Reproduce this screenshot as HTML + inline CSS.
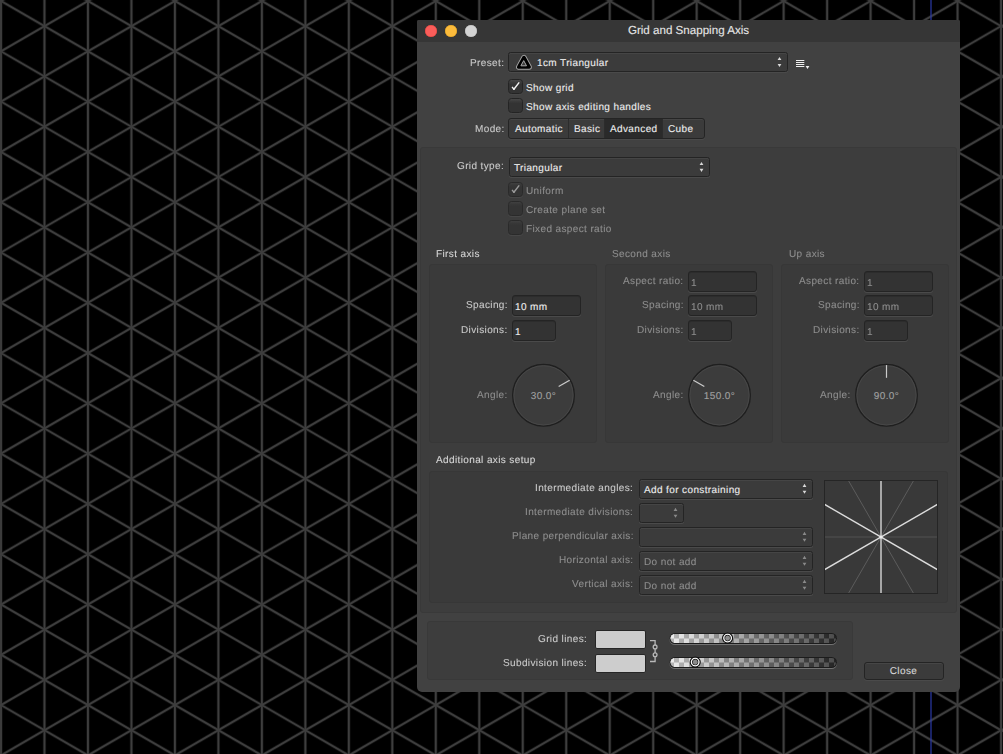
<!DOCTYPE html>
<html><head><meta charset="utf-8">
<style>
html,body{margin:0;padding:0;}
body{width:1003px;height:754px;overflow:hidden;background:#000;position:relative;font-family:"Liberation Sans",sans-serif;font-size:10px;letter-spacing:0.38px;text-rendering:geometricPrecision;-webkit-text-stroke:0.12px currentColor;}
svg.bg{position:absolute;left:0;top:0;}
.a{position:absolute;}
.t{position:absolute;line-height:12px;white-space:nowrap;color:#d2d2d2;}
.ttl{font-size:11.6px;color:#e4e4e4;}
.lbl{color:#cacaca;-webkit-text-stroke:0.1px currentColor;will-change:transform;}
.hdr{color:#d6d6d6;-webkit-text-stroke:0.1px currentColor;will-change:transform;}
.dis{color:#8e8e8e;-webkit-text-stroke:0.1px currentColor;will-change:transform;}
.val{color:#ececec;}
.dial{color:#a0a0a0;}
.btxt{color:#d6d6d6;}
.panel{position:absolute;background:#3a3a3a;border:1px solid #373737;border-radius:3px;box-sizing:border-box;}
.pB{background:#3d3d3d;border-color:#393939;}
.dd{position:absolute;background:#3b3b3b;border:1px solid #242424;border-radius:2.5px;box-sizing:border-box;box-shadow:inset 0 1px 0 #454545,0 1px 0 #4a4a4a;}
.inp{position:absolute;background:#333;border:1px solid #242424;border-radius:3px;box-sizing:border-box;box-shadow:inset 0 1px 0 #2c2c2c,0 1px 0 #4a4a4a;}
.cb{position:absolute;background:linear-gradient(#484848 0,#3a3a3a 2.5px,#333 4.5px,#333);border:1px solid #242424;border-radius:3.5px;box-sizing:border-box;box-shadow:0 1px 0 #474747;}
.cbd{background:linear-gradient(#404040 0,#373737 2.5px,#343434 4.5px,#343434);border-color:#2a2a2a;}
.seg{position:absolute;background:#3b3b3b;border:1px solid #242424;border-radius:3px;box-sizing:border-box;box-shadow:inset 0 1px 0 #454545,0 1px 0 #4a4a4a;}
.sw{position:absolute;background:#cdcdcd;border:1px solid #262626;border-radius:2px;box-sizing:border-box;}
.btn{position:absolute;background:#3b3b3b;border:1px solid #242424;border-radius:3px;box-sizing:border-box;box-shadow:inset 0 1px 0 #464646,0 1px 0 #4a4a4a;}
.sl{position:absolute;width:167px;height:10px;border-radius:5px;overflow:hidden;box-shadow:0 1px 0 #6a6a6a;
 background-color:#9a9a9a;
 background-image:linear-gradient(45deg,#cfcfcf 25%,transparent 25%,transparent 75%,#cfcfcf 75%),linear-gradient(45deg,#cfcfcf 25%,transparent 25%,transparent 75%,#cfcfcf 75%);
 background-size:10px 10px;background-position:0 0,5px 5px;}
.slg{position:absolute;left:0;top:0;width:100%;height:100%;background:linear-gradient(90deg,rgba(240,240,240,0.55),rgba(30,30,30,0) 35%,rgba(30,30,30,0.85));}
.knob{position:absolute;width:11px;height:11px;border-radius:50%;box-sizing:border-box;border:1.3px solid #f4f4f4;box-shadow:0 0 0 1px #151515;background:#6e6e6e;}
</style></head><body>
<svg class="bg" width="1003" height="754">
<g stroke="#131313" stroke-width="3.4">
<line x1="1.00" y1="0" x2="1.00" y2="754"/>
<line x1="44.48" y1="0" x2="44.48" y2="754"/>
<line x1="87.96" y1="0" x2="87.96" y2="754"/>
<line x1="131.44" y1="0" x2="131.44" y2="754"/>
<line x1="174.92" y1="0" x2="174.92" y2="754"/>
<line x1="218.40" y1="0" x2="218.40" y2="754"/>
<line x1="261.88" y1="0" x2="261.88" y2="754"/>
<line x1="305.36" y1="0" x2="305.36" y2="754"/>
<line x1="348.84" y1="0" x2="348.84" y2="754"/>
<line x1="392.32" y1="0" x2="392.32" y2="754"/>
<line x1="435.80" y1="0" x2="435.80" y2="754"/>
<line x1="479.28" y1="0" x2="479.28" y2="754"/>
<line x1="522.76" y1="0" x2="522.76" y2="754"/>
<line x1="566.24" y1="0" x2="566.24" y2="754"/>
<line x1="609.72" y1="0" x2="609.72" y2="754"/>
<line x1="653.20" y1="0" x2="653.20" y2="754"/>
<line x1="696.68" y1="0" x2="696.68" y2="754"/>
<line x1="740.16" y1="0" x2="740.16" y2="754"/>
<line x1="783.64" y1="0" x2="783.64" y2="754"/>
<line x1="827.12" y1="0" x2="827.12" y2="754"/>
<line x1="870.60" y1="0" x2="870.60" y2="754"/>
<line x1="914.08" y1="0" x2="914.08" y2="754"/>
<line x1="957.56" y1="0" x2="957.56" y2="754"/>
<line x1="1001.04" y1="0" x2="1001.04" y2="754"/>
<line x1="0" y1="-653.35" x2="1003" y2="-73.30"/>
<line x1="0" y1="-652.19" x2="1003" y2="-1232.24"/>
<line x1="0" y1="-603.06" x2="1003" y2="-23.01"/>
<line x1="0" y1="-601.90" x2="1003" y2="-1181.95"/>
<line x1="0" y1="-552.77" x2="1003" y2="27.28"/>
<line x1="0" y1="-551.61" x2="1003" y2="-1131.66"/>
<line x1="0" y1="-502.48" x2="1003" y2="77.57"/>
<line x1="0" y1="-501.32" x2="1003" y2="-1081.37"/>
<line x1="0" y1="-452.19" x2="1003" y2="127.86"/>
<line x1="0" y1="-451.03" x2="1003" y2="-1031.08"/>
<line x1="0" y1="-401.90" x2="1003" y2="178.15"/>
<line x1="0" y1="-400.74" x2="1003" y2="-980.79"/>
<line x1="0" y1="-351.61" x2="1003" y2="228.44"/>
<line x1="0" y1="-350.45" x2="1003" y2="-930.50"/>
<line x1="0" y1="-301.32" x2="1003" y2="278.73"/>
<line x1="0" y1="-300.16" x2="1003" y2="-880.21"/>
<line x1="0" y1="-251.03" x2="1003" y2="329.02"/>
<line x1="0" y1="-249.87" x2="1003" y2="-829.92"/>
<line x1="0" y1="-200.74" x2="1003" y2="379.31"/>
<line x1="0" y1="-199.58" x2="1003" y2="-779.63"/>
<line x1="0" y1="-150.45" x2="1003" y2="429.60"/>
<line x1="0" y1="-149.29" x2="1003" y2="-729.34"/>
<line x1="0" y1="-100.16" x2="1003" y2="479.89"/>
<line x1="0" y1="-99.00" x2="1003" y2="-679.05"/>
<line x1="0" y1="-49.87" x2="1003" y2="530.18"/>
<line x1="0" y1="-48.71" x2="1003" y2="-628.76"/>
<line x1="0" y1="0.42" x2="1003" y2="580.47"/>
<line x1="0" y1="1.58" x2="1003" y2="-578.47"/>
<line x1="0" y1="50.71" x2="1003" y2="630.76"/>
<line x1="0" y1="51.87" x2="1003" y2="-528.18"/>
<line x1="0" y1="101.00" x2="1003" y2="681.05"/>
<line x1="0" y1="102.16" x2="1003" y2="-477.89"/>
<line x1="0" y1="151.29" x2="1003" y2="731.34"/>
<line x1="0" y1="152.45" x2="1003" y2="-427.60"/>
<line x1="0" y1="201.58" x2="1003" y2="781.63"/>
<line x1="0" y1="202.74" x2="1003" y2="-377.31"/>
<line x1="0" y1="251.87" x2="1003" y2="831.92"/>
<line x1="0" y1="253.03" x2="1003" y2="-327.02"/>
<line x1="0" y1="302.16" x2="1003" y2="882.21"/>
<line x1="0" y1="303.32" x2="1003" y2="-276.73"/>
<line x1="0" y1="352.45" x2="1003" y2="932.50"/>
<line x1="0" y1="353.61" x2="1003" y2="-226.44"/>
<line x1="0" y1="402.74" x2="1003" y2="982.79"/>
<line x1="0" y1="403.90" x2="1003" y2="-176.15"/>
<line x1="0" y1="453.03" x2="1003" y2="1033.08"/>
<line x1="0" y1="454.19" x2="1003" y2="-125.86"/>
<line x1="0" y1="503.32" x2="1003" y2="1083.37"/>
<line x1="0" y1="504.48" x2="1003" y2="-75.57"/>
<line x1="0" y1="553.61" x2="1003" y2="1133.66"/>
<line x1="0" y1="554.77" x2="1003" y2="-25.28"/>
<line x1="0" y1="603.90" x2="1003" y2="1183.95"/>
<line x1="0" y1="605.06" x2="1003" y2="25.01"/>
<line x1="0" y1="654.19" x2="1003" y2="1234.24"/>
<line x1="0" y1="655.35" x2="1003" y2="75.30"/>
<line x1="0" y1="704.48" x2="1003" y2="1284.53"/>
<line x1="0" y1="705.64" x2="1003" y2="125.59"/>
<line x1="0" y1="754.77" x2="1003" y2="1334.82"/>
<line x1="0" y1="755.93" x2="1003" y2="175.88"/>
<line x1="0" y1="805.06" x2="1003" y2="1385.11"/>
<line x1="0" y1="806.22" x2="1003" y2="226.17"/>
<line x1="0" y1="855.35" x2="1003" y2="1435.40"/>
<line x1="0" y1="856.51" x2="1003" y2="276.46"/>
<line x1="0" y1="905.64" x2="1003" y2="1485.69"/>
<line x1="0" y1="906.80" x2="1003" y2="326.75"/>
<line x1="0" y1="955.93" x2="1003" y2="1535.98"/>
<line x1="0" y1="957.09" x2="1003" y2="377.04"/>
<line x1="0" y1="1006.22" x2="1003" y2="1586.27"/>
<line x1="0" y1="1007.38" x2="1003" y2="427.33"/>
<line x1="0" y1="1056.51" x2="1003" y2="1636.56"/>
<line x1="0" y1="1057.67" x2="1003" y2="477.62"/>
<line x1="0" y1="1106.80" x2="1003" y2="1686.85"/>
<line x1="0" y1="1107.96" x2="1003" y2="527.91"/>
<line x1="0" y1="1157.09" x2="1003" y2="1737.14"/>
<line x1="0" y1="1158.25" x2="1003" y2="578.20"/>
<line x1="0" y1="1207.38" x2="1003" y2="1787.43"/>
<line x1="0" y1="1208.54" x2="1003" y2="628.49"/>
<line x1="0" y1="1257.67" x2="1003" y2="1837.72"/>
<line x1="0" y1="1258.83" x2="1003" y2="678.78"/>
<line x1="0" y1="1307.96" x2="1003" y2="1888.01"/>
<line x1="0" y1="1309.12" x2="1003" y2="729.07"/>
<line x1="0" y1="1358.25" x2="1003" y2="1938.30"/>
<line x1="0" y1="1359.41" x2="1003" y2="779.36"/>
</g>
<g stroke="#3e3e3e" stroke-width="1.9">
<line x1="1.00" y1="0" x2="1.00" y2="754"/>
<line x1="44.48" y1="0" x2="44.48" y2="754"/>
<line x1="87.96" y1="0" x2="87.96" y2="754"/>
<line x1="131.44" y1="0" x2="131.44" y2="754"/>
<line x1="174.92" y1="0" x2="174.92" y2="754"/>
<line x1="218.40" y1="0" x2="218.40" y2="754"/>
<line x1="261.88" y1="0" x2="261.88" y2="754"/>
<line x1="305.36" y1="0" x2="305.36" y2="754"/>
<line x1="348.84" y1="0" x2="348.84" y2="754"/>
<line x1="392.32" y1="0" x2="392.32" y2="754"/>
<line x1="435.80" y1="0" x2="435.80" y2="754"/>
<line x1="479.28" y1="0" x2="479.28" y2="754"/>
<line x1="522.76" y1="0" x2="522.76" y2="754"/>
<line x1="566.24" y1="0" x2="566.24" y2="754"/>
<line x1="609.72" y1="0" x2="609.72" y2="754"/>
<line x1="653.20" y1="0" x2="653.20" y2="754"/>
<line x1="696.68" y1="0" x2="696.68" y2="754"/>
<line x1="740.16" y1="0" x2="740.16" y2="754"/>
<line x1="783.64" y1="0" x2="783.64" y2="754"/>
<line x1="827.12" y1="0" x2="827.12" y2="754"/>
<line x1="870.60" y1="0" x2="870.60" y2="754"/>
<line x1="914.08" y1="0" x2="914.08" y2="754"/>
<line x1="957.56" y1="0" x2="957.56" y2="754"/>
<line x1="1001.04" y1="0" x2="1001.04" y2="754"/>
<line x1="0" y1="-653.35" x2="1003" y2="-73.30"/>
<line x1="0" y1="-652.19" x2="1003" y2="-1232.24"/>
<line x1="0" y1="-603.06" x2="1003" y2="-23.01"/>
<line x1="0" y1="-601.90" x2="1003" y2="-1181.95"/>
<line x1="0" y1="-552.77" x2="1003" y2="27.28"/>
<line x1="0" y1="-551.61" x2="1003" y2="-1131.66"/>
<line x1="0" y1="-502.48" x2="1003" y2="77.57"/>
<line x1="0" y1="-501.32" x2="1003" y2="-1081.37"/>
<line x1="0" y1="-452.19" x2="1003" y2="127.86"/>
<line x1="0" y1="-451.03" x2="1003" y2="-1031.08"/>
<line x1="0" y1="-401.90" x2="1003" y2="178.15"/>
<line x1="0" y1="-400.74" x2="1003" y2="-980.79"/>
<line x1="0" y1="-351.61" x2="1003" y2="228.44"/>
<line x1="0" y1="-350.45" x2="1003" y2="-930.50"/>
<line x1="0" y1="-301.32" x2="1003" y2="278.73"/>
<line x1="0" y1="-300.16" x2="1003" y2="-880.21"/>
<line x1="0" y1="-251.03" x2="1003" y2="329.02"/>
<line x1="0" y1="-249.87" x2="1003" y2="-829.92"/>
<line x1="0" y1="-200.74" x2="1003" y2="379.31"/>
<line x1="0" y1="-199.58" x2="1003" y2="-779.63"/>
<line x1="0" y1="-150.45" x2="1003" y2="429.60"/>
<line x1="0" y1="-149.29" x2="1003" y2="-729.34"/>
<line x1="0" y1="-100.16" x2="1003" y2="479.89"/>
<line x1="0" y1="-99.00" x2="1003" y2="-679.05"/>
<line x1="0" y1="-49.87" x2="1003" y2="530.18"/>
<line x1="0" y1="-48.71" x2="1003" y2="-628.76"/>
<line x1="0" y1="0.42" x2="1003" y2="580.47"/>
<line x1="0" y1="1.58" x2="1003" y2="-578.47"/>
<line x1="0" y1="50.71" x2="1003" y2="630.76"/>
<line x1="0" y1="51.87" x2="1003" y2="-528.18"/>
<line x1="0" y1="101.00" x2="1003" y2="681.05"/>
<line x1="0" y1="102.16" x2="1003" y2="-477.89"/>
<line x1="0" y1="151.29" x2="1003" y2="731.34"/>
<line x1="0" y1="152.45" x2="1003" y2="-427.60"/>
<line x1="0" y1="201.58" x2="1003" y2="781.63"/>
<line x1="0" y1="202.74" x2="1003" y2="-377.31"/>
<line x1="0" y1="251.87" x2="1003" y2="831.92"/>
<line x1="0" y1="253.03" x2="1003" y2="-327.02"/>
<line x1="0" y1="302.16" x2="1003" y2="882.21"/>
<line x1="0" y1="303.32" x2="1003" y2="-276.73"/>
<line x1="0" y1="352.45" x2="1003" y2="932.50"/>
<line x1="0" y1="353.61" x2="1003" y2="-226.44"/>
<line x1="0" y1="402.74" x2="1003" y2="982.79"/>
<line x1="0" y1="403.90" x2="1003" y2="-176.15"/>
<line x1="0" y1="453.03" x2="1003" y2="1033.08"/>
<line x1="0" y1="454.19" x2="1003" y2="-125.86"/>
<line x1="0" y1="503.32" x2="1003" y2="1083.37"/>
<line x1="0" y1="504.48" x2="1003" y2="-75.57"/>
<line x1="0" y1="553.61" x2="1003" y2="1133.66"/>
<line x1="0" y1="554.77" x2="1003" y2="-25.28"/>
<line x1="0" y1="603.90" x2="1003" y2="1183.95"/>
<line x1="0" y1="605.06" x2="1003" y2="25.01"/>
<line x1="0" y1="654.19" x2="1003" y2="1234.24"/>
<line x1="0" y1="655.35" x2="1003" y2="75.30"/>
<line x1="0" y1="704.48" x2="1003" y2="1284.53"/>
<line x1="0" y1="705.64" x2="1003" y2="125.59"/>
<line x1="0" y1="754.77" x2="1003" y2="1334.82"/>
<line x1="0" y1="755.93" x2="1003" y2="175.88"/>
<line x1="0" y1="805.06" x2="1003" y2="1385.11"/>
<line x1="0" y1="806.22" x2="1003" y2="226.17"/>
<line x1="0" y1="855.35" x2="1003" y2="1435.40"/>
<line x1="0" y1="856.51" x2="1003" y2="276.46"/>
<line x1="0" y1="905.64" x2="1003" y2="1485.69"/>
<line x1="0" y1="906.80" x2="1003" y2="326.75"/>
<line x1="0" y1="955.93" x2="1003" y2="1535.98"/>
<line x1="0" y1="957.09" x2="1003" y2="377.04"/>
<line x1="0" y1="1006.22" x2="1003" y2="1586.27"/>
<line x1="0" y1="1007.38" x2="1003" y2="427.33"/>
<line x1="0" y1="1056.51" x2="1003" y2="1636.56"/>
<line x1="0" y1="1057.67" x2="1003" y2="477.62"/>
<line x1="0" y1="1106.80" x2="1003" y2="1686.85"/>
<line x1="0" y1="1107.96" x2="1003" y2="527.91"/>
<line x1="0" y1="1157.09" x2="1003" y2="1737.14"/>
<line x1="0" y1="1158.25" x2="1003" y2="578.20"/>
<line x1="0" y1="1207.38" x2="1003" y2="1787.43"/>
<line x1="0" y1="1208.54" x2="1003" y2="628.49"/>
<line x1="0" y1="1257.67" x2="1003" y2="1837.72"/>
<line x1="0" y1="1258.83" x2="1003" y2="678.78"/>
<line x1="0" y1="1307.96" x2="1003" y2="1888.01"/>
<line x1="0" y1="1309.12" x2="1003" y2="729.07"/>
<line x1="0" y1="1358.25" x2="1003" y2="1938.30"/>
<line x1="0" y1="1359.41" x2="1003" y2="779.36"/>
</g>
<line x1="931" y1="0" x2="931" y2="754" stroke="#2a3aa8" stroke-width="1.2"/>
</svg>
<div class="a" style="left:417px;top:20px;width:543px;height:672px;background:#414141;border-radius:2px 2px 5px 5px;"></div>
<div class="a" style="left:417px;top:20px;width:543px;height:22px;background:#363636;border-radius:2px 2px 0 0;"></div>
<div class="a" style="left:425px;top:25px;width:12px;height:12px;border-radius:50%;background:#fa5d5a;box-shadow:inset 0 0 0 0.5px #e2463f;"></div>
<div class="a" style="left:445px;top:25px;width:12px;height:12px;border-radius:50%;background:#fcbb3c;box-shadow:inset 0 0 0 0.5px #dea123;"></div>
<div class="a" style="left:465px;top:25px;width:12px;height:12px;border-radius:50%;background:#d3d3d3;box-shadow:inset 0 0 0 0.5px #bdbdbd;"></div>
<div class="t ttl" style="top:25.0px;font-size:11.6px;letter-spacing:0;left:538.5px;width:300px;text-align:center;">Grid and Snapping Axis</div>
<div class="t lbl" style="top:58.0px;right:498.4px;text-align:right;">Preset:</div>
<div class="dd" style="left:508px;top:52px;width:280px;height:20px;"></div>
<svg class="a" style="left:513px;top:53px" width="22" height="19"><path d="M10.95 4.65 L5.75 14.05 L16.15 14.05Z" fill="#000" stroke="#a4a4a4" stroke-width="5.4" stroke-linejoin="round"/><path d="M10.95 4.65 L5.75 14.05 L16.15 14.05Z" fill="#000" stroke="#000" stroke-width="3.6" stroke-linejoin="round"/><path d="M10.7 7.6 L7.9 12.8 L13.5 12.8Z" fill="#3a3a3a" stroke="#a8a8a8" stroke-width="1" stroke-linejoin="round"/></svg>
<div class="t val" style="top:58.0px;left:537.0px;">1cm Triangular</div>
<svg class="a" style="left:775px;top:56px" width="9" height="12"><path d="M2.60 4.10 L4.50 1.00 L6.40 4.10Z M2.60 7.90 L4.50 11.00 L6.40 7.90Z" fill="#d8d8d8"/></svg>
<svg class="a" style="left:794px;top:58px" width="18" height="13"><g stroke="#f0f0f0" stroke-width="1"><line x1="2" y1="2.5" x2="10.3" y2="2.5"/><line x1="2" y1="4.5" x2="10.3" y2="4.5"/><line x1="2" y1="6.5" x2="10.3" y2="6.5"/><line x1="2" y1="8.5" x2="10.3" y2="8.5"/></g><path d="M11.6 8 L15.4 8 L13.5 11Z" fill="#f0f0f0"/></svg>
<div class="cb" style="left:508px;top:79px;width:15px;height:15px;"><svg style="position:absolute;left:0;top:0" width="14" height="14"><path d="M3.1 6.8 L4.9 9.3 L10.2 2.4" fill="none" stroke="#f2f2f2" stroke-width="1.45" stroke-linejoin="round"/><circle cx="4.9" cy="8.9" r="0.9" fill="#f2f2f2"/></svg></div>
<div class="t val" style="top:83.0px;left:526.0px;">Show grid</div>
<div class="cb" style="left:508px;top:98px;width:15px;height:15px;"></div>
<div class="t val" style="top:102.0px;left:526.0px;">Show axis editing handles</div>
<div class="t lbl" style="top:124.0px;right:498.4px;text-align:right;">Mode:</div>
<div class="seg" style="left:508px;top:118px;width:197px;height:21px;"></div>
<div class="a" style="left:604px;top:119px;width:59px;height:19px;background:#2a2a2a;"></div>
<div class="a" style="left:568px;top:119px;width:1px;height:19px;background:#2c2c2c;"></div>
<div class="a" style="left:604px;top:119px;width:1px;height:19px;background:#2c2c2c;"></div>
<div class="a" style="left:662px;top:119px;width:1px;height:19px;background:#2c2c2c;"></div>
<div class="t val" style="top:124.0px;left:515.0px;">Automatic</div>
<div class="t val" style="top:124.0px;left:574.0px;">Basic</div>
<div class="t val" style="top:124.0px;left:610.0px;">Advanced</div>
<div class="t val" style="top:124.0px;left:668.0px;">Cube</div>
<div class="panel pB" style="left:420px;top:147px;width:537px;height:466px;"></div>
<div class="t lbl" style="top:161.0px;right:499.0px;text-align:right;">Grid type:</div>
<div class="dd" style="left:509px;top:157px;width:201px;height:20px;"></div>
<div class="t val" style="top:163.0px;left:514.0px;">Triangular</div>
<svg class="a" style="left:697px;top:160px" width="9" height="12"><path d="M2.60 5.00 L4.50 1.90 L6.40 5.00Z M2.60 8.80 L4.50 11.90 L6.40 8.80Z" fill="#d8d8d8"/></svg>
<div class="cb cbd" style="left:508px;top:182px;width:15px;height:15px;"><svg style="position:absolute;left:0;top:0" width="14" height="14"><path d="M3.1 6.8 L4.9 9.3 L10.2 2.4" fill="none" stroke="#9a9a9a" stroke-width="1.45" stroke-linejoin="round"/><circle cx="4.9" cy="8.9" r="0.9" fill="#9a9a9a"/></svg></div>
<div class="t dis" style="top:186.0px;left:526.0px;">Uniform</div>
<div class="cb cbd" style="left:508px;top:201px;width:15px;height:15px;"></div>
<div class="t dis" style="top:205.0px;left:526.0px;">Create plane set</div>
<div class="cb cbd" style="left:508px;top:220px;width:15px;height:15px;"></div>
<div class="t dis" style="top:224.0px;left:526.0px;">Fixed aspect ratio</div>
<div class="t hdr" style="top:249.0px;left:436.0px;">First axis</div>
<div class="t dis" style="top:249.0px;left:612.0px;">Second axis</div>
<div class="t dis" style="top:249.0px;left:788.5px;">Up axis</div>
<div class="panel" style="left:429px;top:264px;width:168px;height:179px;"></div>
<div class="panel" style="left:605px;top:264px;width:168px;height:179px;"></div>
<div class="panel" style="left:781px;top:264px;width:168px;height:179px;"></div>
<div class="t lbl" style="top:300.0px;right:495.4px;text-align:right;">Spacing:</div>
<div class="inp" style="left:512px;top:295px;width:69px;height:21px;"></div>
<div class="t val" style="top:302.0px;left:515.0px;">10 mm</div>
<div class="t lbl" style="top:325.0px;right:495.4px;text-align:right;">Divisions:</div>
<div class="inp" style="left:512px;top:320px;width:44px;height:21px;"></div>
<div class="t val" style="top:327.0px;left:515.0px;">1</div>
<div class="t dis" style="top:276.0px;right:319.4px;text-align:right;">Aspect ratio:</div>
<div class="inp" style="left:688px;top:271px;width:69px;height:21px;"></div>
<div class="t dis" style="top:278.0px;left:691.0px;">1</div>
<div class="t dis" style="top:300.0px;right:319.4px;text-align:right;">Spacing:</div>
<div class="inp" style="left:688px;top:295px;width:69px;height:21px;"></div>
<div class="t dis" style="top:302.0px;left:691.0px;">10 mm</div>
<div class="t dis" style="top:325.0px;right:319.4px;text-align:right;">Divisions:</div>
<div class="inp" style="left:688px;top:320px;width:44px;height:21px;"></div>
<div class="t dis" style="top:327.0px;left:691.0px;">1</div>
<div class="t dis" style="top:276.0px;right:143.0px;text-align:right;">Aspect ratio:</div>
<div class="inp" style="left:864px;top:271px;width:69px;height:21px;"></div>
<div class="t dis" style="top:278.0px;left:867.0px;">1</div>
<div class="t dis" style="top:300.0px;right:143.0px;text-align:right;">Spacing:</div>
<div class="inp" style="left:864px;top:295px;width:69px;height:21px;"></div>
<div class="t dis" style="top:302.0px;left:867.0px;">10 mm</div>
<div class="t dis" style="top:325.0px;right:143.0px;text-align:right;">Divisions:</div>
<div class="inp" style="left:864px;top:320px;width:44px;height:21px;"></div>
<div class="t dis" style="top:327.0px;left:867.0px;">1</div>
<svg class="a" style="left:509px;top:361px" width="68" height="68"><circle cx="34.5" cy="34.30000000000001" r="30.8" fill="#3c3c3c" stroke="#1f1f1f" stroke-width="1.4"/><circle cx="34.5" cy="34.30000000000001" r="29.6" fill="none" stroke="#484848" stroke-width="0.9"/><line x1="49.66" y1="25.55" x2="60.65" y2="19.20" stroke="#cccccc" stroke-width="1.2"/></svg>
<div class="t dial" style="top:391.0px;left:393.5px;width:300px;text-align:center;">30.0°</div>
<div class="t dis" style="top:390.0px;right:495.2px;text-align:right;">Angle:</div>
<svg class="a" style="left:685px;top:361px" width="68" height="68"><circle cx="34.5" cy="34.30000000000001" r="30.8" fill="#3c3c3c" stroke="#1f1f1f" stroke-width="1.4"/><circle cx="34.5" cy="34.30000000000001" r="29.6" fill="none" stroke="#484848" stroke-width="0.9"/><line x1="19.34" y1="25.55" x2="8.35" y2="19.20" stroke="#cccccc" stroke-width="1.2"/></svg>
<div class="t dial" style="top:391.0px;left:569.5px;width:300px;text-align:center;">150.0°</div>
<div class="t dis" style="top:390.0px;right:319.4px;text-align:right;">Angle:</div>
<svg class="a" style="left:852px;top:361px" width="68" height="68"><circle cx="34.5" cy="34.30000000000001" r="30.8" fill="#3c3c3c" stroke="#1f1f1f" stroke-width="1.4"/><circle cx="34.5" cy="34.30000000000001" r="29.6" fill="none" stroke="#484848" stroke-width="0.9"/><line x1="34.50" y1="16.80" x2="34.50" y2="4.10" stroke="#cccccc" stroke-width="1.2"/></svg>
<div class="t dial" style="top:391.0px;left:736.5px;width:300px;text-align:center;">90.0°</div>
<div class="t dis" style="top:390.0px;right:152.5px;text-align:right;">Angle:</div>
<div class="t hdr" style="top:455.0px;left:436.0px;">Additional axis setup</div>
<div class="panel" style="left:429px;top:471px;width:519px;height:132px;"></div>
<div class="t lbl" style="top:483.0px;right:369.4px;text-align:right;">Intermediate angles:</div>
<div class="t dis" style="top:507.0px;right:369.4px;text-align:right;">Intermediate divisions:</div>
<div class="t dis" style="top:531.0px;right:369.4px;text-align:right;">Plane perpendicular axis:</div>
<div class="t dis" style="top:555.0px;right:369.4px;text-align:right;">Horizontal axis:</div>
<div class="t dis" style="top:579.0px;right:369.4px;text-align:right;">Vertical axis:</div>
<div class="dd" style="left:639px;top:479px;width:174px;height:20px;"></div>
<div class="t val" style="top:485.0px;left:644.0px;">Add for constraining</div>
<svg class="a" style="left:800px;top:482px" width="9" height="12"><path d="M2.60 4.90 L4.50 1.80 L6.40 4.90Z M2.60 8.70 L4.50 11.80 L6.40 8.70Z" fill="#d8d8d8"/></svg>
<div class="dd" style="left:639px;top:503px;width:45px;height:20px;"></div>
<svg class="a" style="left:671px;top:506px" width="9" height="12"><path d="M2.60 4.90 L4.50 1.80 L6.40 4.90Z M2.60 8.70 L4.50 11.80 L6.40 8.70Z" fill="#8a8a8a"/></svg>
<div class="dd" style="left:639px;top:527px;width:174px;height:20px;"></div>
<svg class="a" style="left:800px;top:530px" width="9" height="12"><path d="M2.60 4.90 L4.50 1.80 L6.40 4.90Z M2.60 8.70 L4.50 11.80 L6.40 8.70Z" fill="#8a8a8a"/></svg>
<div class="dd" style="left:639px;top:551px;width:174px;height:20px;"></div>
<div class="t dis" style="top:557.0px;left:644.0px;">Do not add</div>
<svg class="a" style="left:800px;top:554px" width="9" height="12"><path d="M2.60 4.90 L4.50 1.80 L6.40 4.90Z M2.60 8.70 L4.50 11.80 L6.40 8.70Z" fill="#8a8a8a"/></svg>
<div class="dd" style="left:639px;top:575px;width:174px;height:20px;"></div>
<div class="t dis" style="top:581.0px;left:644.0px;">Do not add</div>
<svg class="a" style="left:800px;top:578px" width="9" height="12"><path d="M2.60 4.90 L4.50 1.80 L6.40 4.90Z M2.60 8.70 L4.50 11.80 L6.40 8.70Z" fill="#8a8a8a"/></svg>
<div class="a" style="left:824px;top:480px;width:114px;height:114px;background:#393939;border:1px solid #252525;box-sizing:border-box;overflow:hidden;"><svg style="position:absolute;left:-1px;top:-1px" width="114" height="114"><line x1="-43.00" y1="57.00" x2="157.00" y2="57.00" stroke="#525252" stroke-width="1.2"/><line x1="7.00" y1="143.60" x2="107.00" y2="-29.60" stroke="#5c5c5c" stroke-width="1"/><line x1="107.00" y1="143.60" x2="7.00" y2="-29.60" stroke="#5c5c5c" stroke-width="1"/><line x1="57.00" y1="157.00" x2="57.00" y2="-43.00" stroke="#b4b4b4" stroke-width="1.8"/><line x1="-29.60" y1="107.00" x2="143.60" y2="7.00" stroke="#dcdcdc" stroke-width="1.4"/><line x1="143.60" y1="107.00" x2="-29.60" y2="7.00" stroke="#dcdcdc" stroke-width="1.4"/><circle cx="57" cy="57" r="1.6" fill="#eee"/></svg></div>
<div class="panel pB" style="left:427px;top:621px;width:426px;height:59px;"></div>
<div class="t lbl" style="top:634.0px;right:416.2px;text-align:right;">Grid lines:</div>
<div class="t lbl" style="top:658.0px;right:416.2px;text-align:right;">Subdivision lines:</div>
<div class="sw" style="left:595px;top:630px;width:51px;height:19px;"></div>
<div class="sw" style="left:595px;top:654px;width:51px;height:19px;"></div>
<svg class="a" style="left:647px;top:638px" width="14" height="28"><g fill="none" stroke="#b8b8b8" stroke-width="1.3"><path d="M3 2.6 H8.1 V7 M8.1 10.8 V14.9 M8.1 18.7 V23.5 H3"/><circle cx="8.1" cy="8.9" r="1.9"/><circle cx="8.1" cy="16.8" r="1.9"/></g></svg>
<svg class="a" style="left:668px;top:632px" width="172" height="14">
<defs><pattern id="ck1" x="6" y="2" width="10" height="9" patternUnits="userSpaceOnUse"><rect x="5" y="0" width="5" height="4.5" fill="#fff"/><rect x="0" y="4.5" width="5" height="4.5" fill="#fff"/></pattern>
<mask id="mk1"><rect x="0" y="0" width="172" height="14" fill="url(#ck1)"/></mask>
<linearGradient id="gd1" x1="0" x2="1" y1="0" y2="0"><stop offset="0" stop-color="#b6b6b6"/><stop offset="1" stop-color="#242424"/></linearGradient>
<linearGradient id="gl1" x1="0" x2="1" y1="0" y2="0"><stop offset="0" stop-color="#eeeeee"/><stop offset="1" stop-color="#4c4c4c"/></linearGradient></defs>
<rect x="1.5" y="2" width="167.5" height="11" rx="5.5" fill="#727272"/>
<rect x="1.5" y="1" width="167.5" height="11" rx="5.5" fill="#1c1c1c"/>
<rect x="2.5" y="2" width="165.5" height="9" rx="4.5" fill="url(#gd1)"/>
<rect x="2.5" y="2" width="165.5" height="9" rx="4.5" fill="url(#gl1)" mask="url(#mk1)"/>
</svg>
<svg class="a" style="left:721px;top:631px" width="14" height="14"><circle cx="6.600000000000023" cy="7.100000000000023" r="2.6" fill="#8a8a8a"/><circle cx="6.600000000000023" cy="7.100000000000023" r="2.95" fill="none" stroke="#151515" stroke-width="0.9"/><circle cx="6.600000000000023" cy="7.100000000000023" r="4.0" fill="none" stroke="#fafafa" stroke-width="1.45"/><circle cx="6.600000000000023" cy="7.100000000000023" r="5.05" fill="none" stroke="#0c0c0c" stroke-width="1.1"/></svg>
<svg class="a" style="left:668px;top:656px" width="172" height="14">
<defs><pattern id="ck2" x="6" y="2" width="10" height="9" patternUnits="userSpaceOnUse"><rect x="5" y="0" width="5" height="4.5" fill="#fff"/><rect x="0" y="4.5" width="5" height="4.5" fill="#fff"/></pattern>
<mask id="mk2"><rect x="0" y="0" width="172" height="14" fill="url(#ck2)"/></mask>
<linearGradient id="gd2" x1="0" x2="1" y1="0" y2="0"><stop offset="0" stop-color="#b6b6b6"/><stop offset="1" stop-color="#242424"/></linearGradient>
<linearGradient id="gl2" x1="0" x2="1" y1="0" y2="0"><stop offset="0" stop-color="#eeeeee"/><stop offset="1" stop-color="#4c4c4c"/></linearGradient></defs>
<rect x="1.5" y="2" width="167.5" height="11" rx="5.5" fill="#727272"/>
<rect x="1.5" y="1" width="167.5" height="11" rx="5.5" fill="#1c1c1c"/>
<rect x="2.5" y="2" width="165.5" height="9" rx="4.5" fill="url(#gd2)"/>
<rect x="2.5" y="2" width="165.5" height="9" rx="4.5" fill="url(#gl2)" mask="url(#mk2)"/>
</svg>
<svg class="a" style="left:688px;top:655px" width="14" height="14"><circle cx="7.2000000000000455" cy="7.100000000000023" r="2.6" fill="#8a8a8a"/><circle cx="7.2000000000000455" cy="7.100000000000023" r="2.95" fill="none" stroke="#151515" stroke-width="0.9"/><circle cx="7.2000000000000455" cy="7.100000000000023" r="4.0" fill="none" stroke="#fafafa" stroke-width="1.45"/><circle cx="7.2000000000000455" cy="7.100000000000023" r="5.05" fill="none" stroke="#0c0c0c" stroke-width="1.1"/></svg>
<div class="btn" style="left:864px;top:662px;width:80px;height:18px;"></div>
<div class="t btxt" style="top:666.0px;left:753.5px;width:300px;text-align:center;">Close</div>
</body></html>
